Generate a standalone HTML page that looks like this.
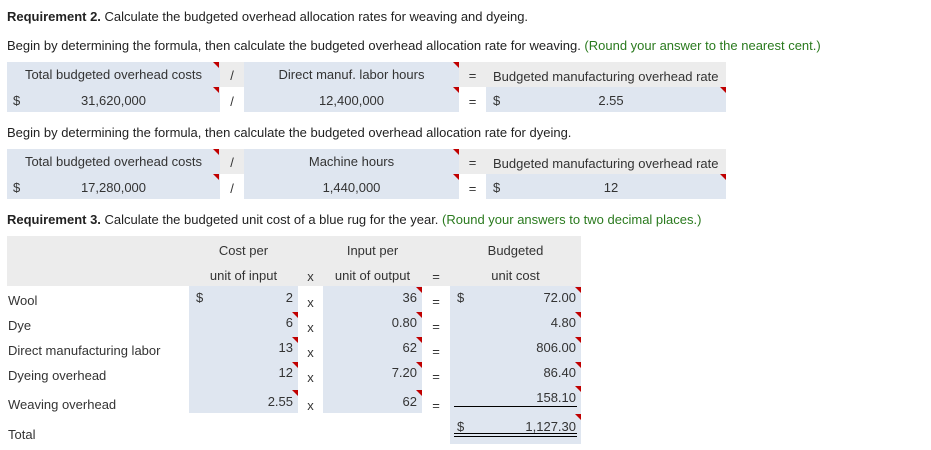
<!DOCTYPE html>
<html><head><style>
body{margin:0;width:931px;height:450px;background:#fff;font-family:"Liberation Sans",Arial,sans-serif;font-size:13px;color:#222;position:relative;overflow:hidden}
.a{position:absolute;white-space:nowrap}
.b{position:absolute;background:#dfe6f0}
.g{position:absolute;background:#ececec}
.t{position:absolute;width:0;height:0;border-top:6px solid #c00000;border-left:6px solid transparent}
.gr{color:#2a7a1e}
.c{text-align:center}
.r{text-align:right}
.tb{color:#333}
</style></head><body>
<div class="a" style="left:7px;top:9px"><b>Requirement 2.</b> Calculate the budgeted overhead allocation rates for weaving and dyeing.</div>
<div class="a" style="left:7px;top:38px">Begin by determining the formula, then calculate the budgeted overhead allocation rate for weaving. <span class="gr">(Round your answer to the nearest cent.)</span></div>

<div class="tb">
<!-- table 1 -->
<div class="b" style="left:7px;top:62px;width:213px;height:50px"></div>
<div class="g" style="left:220px;top:62px;width:24px;height:25px"></div>
<div class="b" style="left:244px;top:62px;width:215px;height:50px"></div>
<div class="g" style="left:459px;top:62px;width:27px;height:25px"></div>
<div class="g" style="left:486px;top:62px;width:240px;height:25px"></div>
<div class="b" style="left:486px;top:87px;width:240px;height:25px"></div>
<div class="t" style="left:213px;top:62px"></div><div class="t" style="left:213px;top:87px"></div>
<div class="t" style="left:453px;top:62px"></div><div class="t" style="left:453px;top:87px"></div>
<div class="t" style="left:720px;top:87px"></div>
<div class="a c" style="left:7px;top:67px;width:213px">Total budgeted overhead costs</div>
<div class="a c" style="left:220px;top:68px;width:24px">/</div>
<div class="a c" style="left:244px;top:67px;width:215px">Direct manuf. labor hours</div>
<div class="a c" style="left:459px;top:68px;width:27px">=</div>
<div class="a" style="left:493px;top:69px">Budgeted manufacturing overhead rate</div>
<div class="a" style="left:13px;top:93px">$</div>
<div class="a c" style="left:7px;top:93px;width:213px">31,620,000</div>
<div class="a c" style="left:220px;top:94px;width:24px">/</div>
<div class="a c" style="left:244px;top:93px;width:215px">12,400,000</div>
<div class="a c" style="left:459px;top:94px;width:27px">=</div>
<div class="a" style="left:493px;top:93px">$</div>
<div class="a c" style="left:486px;top:93px;width:250px">2.55</div>
</div>

<div class="a" style="left:7px;top:125px">Begin by determining the formula, then calculate the budgeted overhead allocation rate for dyeing.</div>

<div class="tb">
<!-- table 2 -->
<div class="b" style="left:7px;top:149px;width:213px;height:50px"></div>
<div class="g" style="left:220px;top:149px;width:24px;height:25px"></div>
<div class="b" style="left:244px;top:149px;width:215px;height:50px"></div>
<div class="g" style="left:459px;top:149px;width:27px;height:25px"></div>
<div class="g" style="left:486px;top:149px;width:240px;height:25px"></div>
<div class="b" style="left:486px;top:174px;width:240px;height:25px"></div>
<div class="t" style="left:213px;top:149px"></div><div class="t" style="left:213px;top:174px"></div>
<div class="t" style="left:453px;top:149px"></div><div class="t" style="left:453px;top:174px"></div>
<div class="t" style="left:720px;top:174px"></div>
<div class="a c" style="left:7px;top:154px;width:213px">Total budgeted overhead costs</div>
<div class="a c" style="left:220px;top:155px;width:24px">/</div>
<div class="a c" style="left:244px;top:154px;width:215px">Machine hours</div>
<div class="a c" style="left:459px;top:155px;width:27px">=</div>
<div class="a" style="left:493px;top:156px">Budgeted manufacturing overhead rate</div>
<div class="a" style="left:13px;top:180px">$</div>
<div class="a c" style="left:7px;top:180px;width:213px">17,280,000</div>
<div class="a c" style="left:220px;top:181px;width:24px">/</div>
<div class="a c" style="left:244px;top:180px;width:215px">1,440,000</div>
<div class="a c" style="left:459px;top:181px;width:27px">=</div>
<div class="a" style="left:493px;top:180px">$</div>
<div class="a c" style="left:486px;top:180px;width:250px">12</div>
</div>

<div class="a" style="left:7px;top:212px"><b>Requirement 3.</b> Calculate the budgeted unit cost of a blue rug for the year. <span class="gr">(Round your answers to two decimal places.)</span></div>

<div class="tb">
<!-- table 3 -->
<div class="g" style="left:7px;top:236px;width:574px;height:50px"></div>
<div class="b" style="left:189px;top:286px;width:109px;height:127px"></div>
<div class="b" style="left:323px;top:286px;width:99px;height:127px"></div>
<div class="b" style="left:450px;top:286px;width:131px;height:158px"></div>
<div class="a c" style="left:189px;top:243px;width:109px">Cost per</div>
<div class="a c" style="left:323px;top:243px;width:99px">Input per</div>
<div class="a c" style="left:450px;top:243px;width:131px">Budgeted</div>
<div class="a c" style="left:189px;top:268px;width:109px">unit of input</div>
<div class="a c" style="left:298px;top:269px;width:25px">x</div>
<div class="a c" style="left:323px;top:268px;width:99px">unit of output</div>
<div class="a c" style="left:422px;top:269px;width:28px">=</div>
<div class="a c" style="left:450px;top:268px;width:131px">unit cost</div>

<div class="a" style="left:8px;top:293px">Wool</div>
<div class="a" style="left:8px;top:318px">Dye</div>
<div class="a" style="left:8px;top:343px">Direct manufacturing labor</div>
<div class="a" style="left:8px;top:368px">Dyeing overhead</div>
<div class="a" style="left:8px;top:397px">Weaving overhead</div>
<div class="a" style="left:8px;top:427px">Total</div>

<div class="a" style="left:196px;top:290px">$</div>
<div class="a" style="left:457px;top:290px">$</div>

<div class="a r" style="left:189px;top:290px;width:104px">2</div>
<div class="a r" style="left:189px;top:315px;width:104px">6</div>
<div class="a r" style="left:189px;top:340px;width:104px">13</div>
<div class="a r" style="left:189px;top:365px;width:104px">12</div>
<div class="a r" style="left:189px;top:394px;width:104px">2.55</div>
<div class="a r" style="left:323px;top:290px;width:94px">36</div>
<div class="a r" style="left:323px;top:315px;width:94px">0.80</div>
<div class="a r" style="left:323px;top:340px;width:94px">62</div>
<div class="a r" style="left:323px;top:365px;width:94px">7.20</div>
<div class="a r" style="left:323px;top:394px;width:94px">62</div>
<div class="a r" style="left:450px;top:290px;width:126px">72.00</div>
<div class="a r" style="left:450px;top:315px;width:126px">4.80</div>
<div class="a r" style="left:450px;top:340px;width:126px">806.00</div>
<div class="a r" style="left:450px;top:365px;width:126px">86.40</div>
<div class="a r" style="left:450px;top:390px;width:126px">158.10</div>
<div class="a r" style="left:450px;top:419px;width:126px">1,127.30</div>
<div class="a" style="left:457px;top:419px">$</div>
<div class="a" style="left:454px;top:406px;width:123px;height:1px;background:#000"></div>
<div class="a" style="left:454px;top:433px;width:123px;height:4px;border-top:1px solid #000;border-bottom:1px solid #000;box-sizing:border-box"></div>

<div class="a c" style="left:298px;top:295px;width:25px">x</div>
<div class="a c" style="left:298px;top:320px;width:25px">x</div>
<div class="a c" style="left:298px;top:345px;width:25px">x</div>
<div class="a c" style="left:298px;top:370px;width:25px">x</div>
<div class="a c" style="left:298px;top:398px;width:25px">x</div>
<div class="a c" style="left:422px;top:294px;width:28px">=</div>
<div class="a c" style="left:422px;top:319px;width:28px">=</div>
<div class="a c" style="left:422px;top:344px;width:28px">=</div>
<div class="a c" style="left:422px;top:369px;width:28px">=</div>
<div class="a c" style="left:422px;top:398px;width:28px">=</div>

<div class="t" style="left:292px;top:312px"></div><div class="t" style="left:292px;top:337px"></div>
<div class="t" style="left:292px;top:362px"></div><div class="t" style="left:292px;top:390px"></div>
<div class="t" style="left:416px;top:287px"></div><div class="t" style="left:416px;top:312px"></div>
<div class="t" style="left:416px;top:337px"></div><div class="t" style="left:416px;top:362px"></div>
<div class="t" style="left:416px;top:390px"></div>
<div class="t" style="left:575px;top:287px"></div><div class="t" style="left:575px;top:312px"></div>
<div class="t" style="left:575px;top:337px"></div><div class="t" style="left:575px;top:362px"></div>
<div class="t" style="left:575px;top:386px"></div><div class="t" style="left:575px;top:414px"></div>
</div>
</body></html>
